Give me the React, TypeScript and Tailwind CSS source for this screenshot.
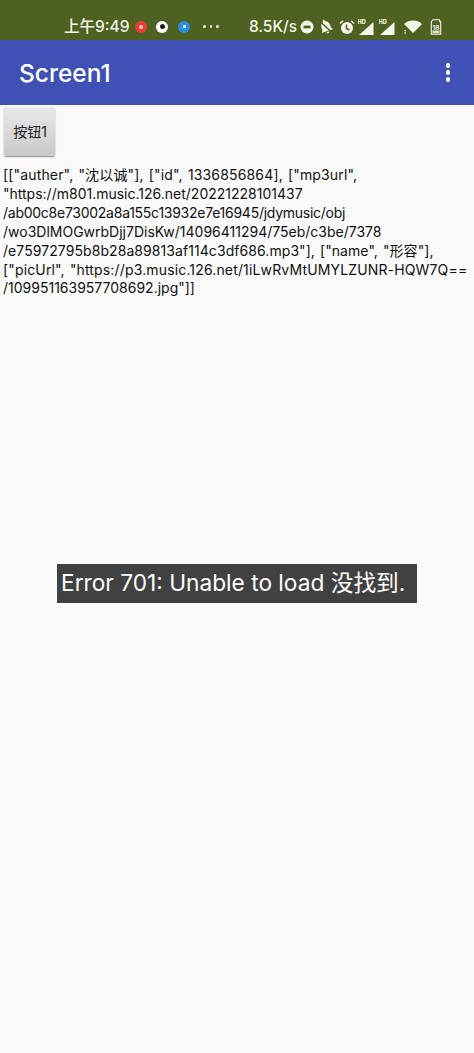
import React from 'react';

const FONT = "font-['Inter','Noto_Sans_CJK_SC',sans-serif]";

function SignalIcon({ className }: { className: string }) {
  return (
    <svg width="16" height="16" viewBox="0 0 16 16" className={className}>
      <path d="M15.5 3v13H1z" fill="#f4f6ea" />
      <path d="M0 0h9.500v5.500H7L0 12z" fill="#4f6121" />
      <text x="-0.5" y="5.2" fontSize="5.6" fontWeight="800" fill="#f4f6ea" fontFamily="Inter, sans-serif">HD</text>
    </svg>
  );
}

function StatusIcons() {
  return (
    <div className="flex items-center">
      {/* do not disturb */}
      <svg width="14" height="14" viewBox="0 0 14 14" className="ml-[3px]">
        <circle cx="7" cy="7" r="6.5" fill="#f4f6ea" />
        <rect x="3.5" y="5.6" width="7" height="2.8" fill="#4f6121" />
      </svg>
      {/* muted bell */}
      <svg width="16" height="16" viewBox="0 0 16 16" className="ml-[4px]">
        <g transform="rotate(-20 8 8)">
          <path d="M8 .5c-.7 0-1.100.4-1.100 1.100v.7C4.500 3 3.500 5 3.500 7v3.200L2 12.300h12l-1.500-2.100V7c0-2-1-4-3.400-4.700v-.7C9.100.9 8.700.5 8 .5z" fill="#f4f6ea" />
          <path d="M6.500 13.200h3a1.500 1.500 0 0 1-3 0z" fill="#f4f6ea" />
        </g>
        <path d="M2 2.500L14 13.500" stroke="#4f6121" strokeWidth="1.6" />
      </svg>
      {/* alarm */}
      <svg width="16" height="16" viewBox="0 0 16 16" className="ml-[5px]">
        <circle cx="8" cy="9" r="6" fill="#f4f6ea" />
        <path d="M7.500 5.500v4l3 1.500" stroke="#4f6121" strokeWidth="1.500" fill="none" />
        <path d="M1 4.500L4 1.800M15 4.500L12 1.800" stroke="#f4f6ea" strokeWidth="1.500" />
      </svg>
      <SignalIcon className="ml-[3px]" />
      <SignalIcon className="ml-[5px]" />
      {/* wifi */}
      <svg width="18" height="15" viewBox="0 0 18 15" className="ml-[9px]">
        <path d="M0 5C2.500 2.500 5.500 1.500 9 1.500s6.500 1 9 3.500L9 14z" fill="#f4f6ea" />
        <rect x="0.5" y="11" width="1.400" height="1.400" fill="#f4f6ea" />
        <rect x="0.5" y="13.300" width="1.400" height="1.400" fill="#f4f6ea" />
      </svg>
      {/* battery */}
      <svg width="12" height="16" viewBox="0 0 12 16" className="ml-[8px]">
        <path d="M3 .8h6.500v1.400h1.200v13H1.300V2.600L3 .8z" fill="none" stroke="#f4f6ea" strokeWidth="1.100" />
        <rect x="2.400" y="11.500" width="7.200" height="2.800" fill="#f4f6ea" opacity="0.85" />
        <text x="6" y="10.500" textAnchor="middle" fontSize="6.500" fontWeight="700" fill="#f4f6ea" fontFamily="Inter, sans-serif">18</text>
      </svg>
    </div>
  );
}

export default function App() {
  return (
    <div className={`relative flex h-[1053px] w-[474px] flex-col overflow-hidden bg-[#fafafa] ${FONT}`}>
      {/* status bar */}
      <div className="flex h-[40px] shrink-0 items-center bg-[#4f6121] pl-[64px] pt-[13px] text-[#f4f6ea]">
        <span className="text-[15.5px] font-medium leading-none">上午9:49</span>
        <span className="ml-[6px] flex h-[12px] w-[12px] items-center justify-center rounded-full bg-[#ea3b35]">
          <span className="h-[4px] w-[4px] rounded-full bg-[#f8d0cc]" />
        </span>
        <span className="ml-[9px] flex h-[12px] w-[12px] items-center justify-center rounded-full bg-white">
          <span className="h-[5px] w-[5px] rounded-full bg-[#222]" />
        </span>
        <span className="ml-[10px] flex h-[12px] w-[12px] items-center justify-center rounded-full bg-[#2b8fde]">
          <span className="h-[3px] w-[3px] bg-[#cfe6fa]" />
        </span>
        <span className="ml-[13px] flex gap-[4px]">
          <span className="h-[2.5px] w-[2.5px] rounded-full bg-[#f4f6ea]" />
          <span className="h-[2.5px] w-[2.5px] rounded-full bg-[#f4f6ea]" />
          <span className="h-[2.5px] w-[2.5px] rounded-full bg-[#f4f6ea]" />
        </span>
        <span className="ml-[30px] text-[15.5px] font-medium leading-none">8.5K/s</span>
        <StatusIcons />
      </div>

      {/* app bar */}
      <div className="flex h-[65px] shrink-0 items-center justify-between bg-[#3f51b5] pl-[19px] pr-[24px]">
        <span className="pt-[1px] text-[24.5px] font-medium text-white">Screen1</span>
        <span className="flex flex-col gap-[2.5px]">
          <span className="h-[4.5px] w-[4.5px] rounded-full bg-white" />
          <span className="h-[4.5px] w-[4.5px] rounded-full bg-white" />
          <span className="h-[4.5px] w-[4.5px] rounded-full bg-white" />
        </span>
      </div>

      {/* content */}
      <div className="flex flex-col items-start pl-[4px] pt-[2px]">
        <button className="h-[49px] w-[51px] rounded-[2px] bg-gradient-to-b from-[#e9e9e9] to-[#c9c9c9] pl-[1px] text-[14px] text-[#222] shadow-[0_1px_1.5px_rgba(0,0,0,0.45)]">
          按钮1
        </button>
        <div className="mt-[10px] -ml-[1px] whitespace-nowrap text-[14px] leading-[18.9px] text-[#111] [word-spacing:1px]">
          <div className="tracking-[0.16px]">[["auther", "沈以诚"], ["id", 1336856864], ["mp3url",</div>
          <div>"https://m801.music.126.net/20221228101437</div>
          <div className="tracking-[-0.26px]">/ab00c8e73002a8a155c13932e7e16945/jdymusic/obj</div>
          <div>/wo3DlMOGwrbDjj7DisKw/14096411294/75eb/c3be/7378</div>
          <div className="tracking-[0.07px]">/e75972795b8b28a89813af114c3df686.mp3"], ["name", "形容"],</div>
          <div className="tracking-[0.15px]">["picUrl", "https://p3.music.126.net/1iLwRvMtUMYLZUNR-HQW7Q==</div>
          <div>/109951163957708692.jpg"]]</div>
        </div>
      </div>

      {/* toast */}
      <div className="absolute left-[57px] top-[564px] flex h-[39px] w-[360px] items-center bg-[#414141] pl-[4px] text-[22.7px] whitespace-nowrap text-white">
        Error 701: Unable to load 没找到.
      </div>
    </div>
  );
}
